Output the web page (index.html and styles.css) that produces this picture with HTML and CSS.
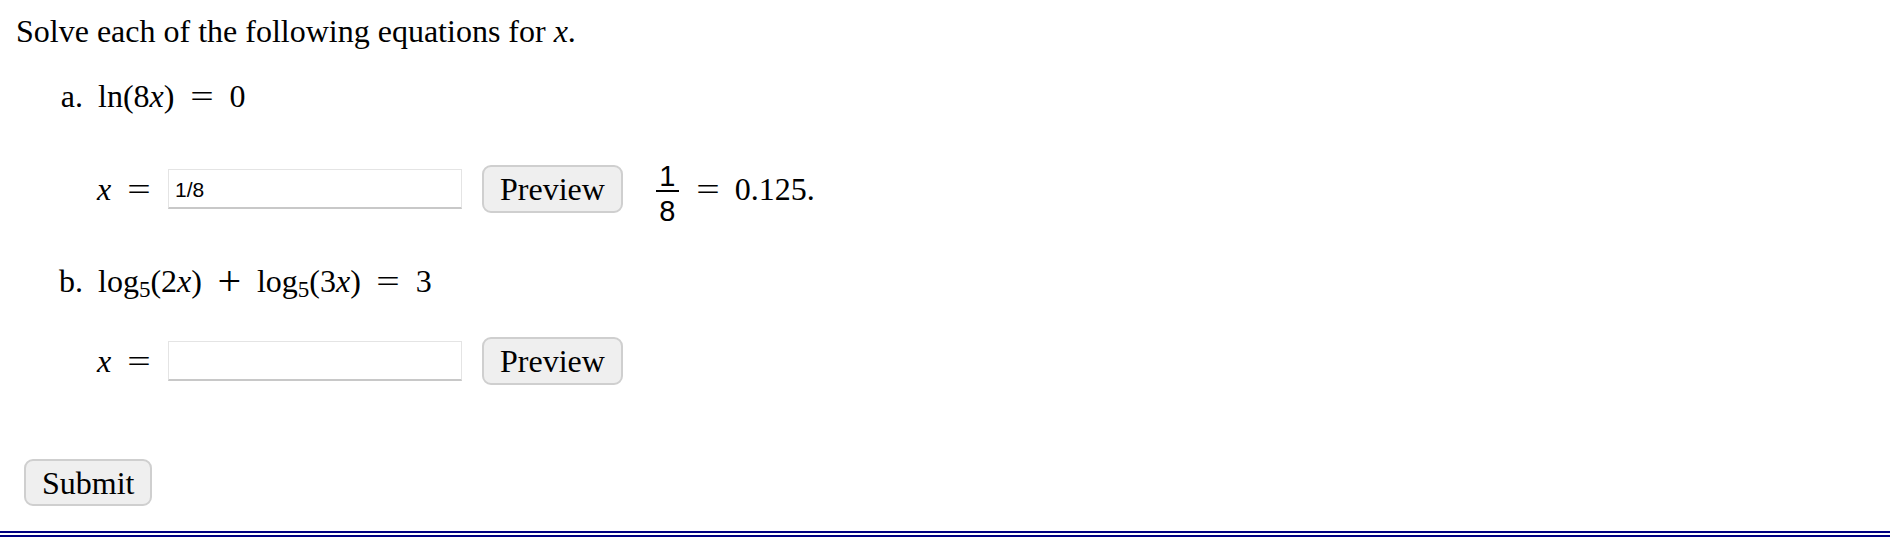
FILE: index.html
```html
<!DOCTYPE html>
<html lang="en">
<head>
<meta charset="utf-8">
<title>Solve equations</title>
<link rel="stylesheet" href="styles.css">
</head>
<body>
<div class="page">
  <p class="title">Solve each of the following equations for <i class="mv">x</i>.</p>

  <div class="eq eq-a"><span class="label">a.</span><span class="math">ln(8<i class="mv">x</i>)<span class="op"><span class="eqs">=</span></span>0</span></div>

  <div class="row row-a">
    <i class="mv var">x</i>
    <span class="rel"><span class="eqs">=</span></span>
    <input class="ans" type="text" value="1/8">
    <button class="btn btn-preview" type="button">Preview</button>
    <span class="frac"><span class="num">1</span><span class="bar"></span><span class="den">8</span></span>
    <span class="rel2"><span class="eqs">=</span></span>
    <span class="val">0.125.</span>
  </div>

  <div class="eq eq-b"><span class="label">b.</span><span class="math">log<span class="sub">5</span>(2<i class="mv">x</i>)<span class="op"><span class="plus">+</span></span>log<span class="sub">5</span>(3<i class="mv">x</i>)<span class="op"><span class="eqs">=</span></span>3</span></div>

  <div class="row row-b">
    <i class="mv var">x</i>
    <span class="rel"><span class="eqs">=</span></span>
    <input class="ans" type="text" value="">
    <button class="btn btn-preview" type="button">Preview</button>
  </div>

  <button class="btn btn-submit" type="button">Submit</button>
</div>
<div class="rule"></div>
</body>
</html>
```

FILE: styles.css
```css
html, body {
  margin: 0;
  padding: 0;
  background: #ffffff;
}

body {
  font-family: "Liberation Serif", "Times New Roman", serif;
  font-size: 32px;
  color: #000000;
}

.page {
  padding: 11px 16px 0 16px;
}

.title {
  margin: 0;
  line-height: 40px;
}

.mv {
  font-style: italic;
}

.eq {
  height: 40px;
  line-height: 40px;
  white-space: nowrap;
}

.eq-a {
  margin-top: 25px;
}

.eq-b {
  margin-top: 48px;
}

.label {
  display: inline-block;
  width: 67px;
  text-align: right;
}

.math {
  margin-left: 15px;
}

.op {
  display: inline-block;
  width: 55px;
  text-align: center;
}

.eqs {
  display: inline-block;
  transform: scaleX(1.3);
}

.plus {
  display: inline-block;
  font-size: 42px;
  line-height: 20px;
  vertical-align: -3px;
}

.sub {
  font-size: 23px;
  line-height: 0;
  vertical-align: -5px;
}

.row {
  display: flex;
  align-items: center;
  height: 48px;
  margin-left: 81px;
  line-height: 40px;
}

.row-a {
  margin-top: 49px;
}

.row-b {
  margin-top: 36px;
}

.var {
  width: 14px;
}

.rel {
  width: 57px;
  text-align: center;
}

.ans {
  box-sizing: border-box;
  width: 294px;
  height: 40px;
  margin: 0;
  padding: 2px 6px 0 6px;
  border: 1px solid #e4e4e4;
  border-bottom: 2px solid #c8c8c8;
  border-radius: 0;
  background: #ffffff;
  font-family: "Liberation Sans", Arial, sans-serif;
  font-size: 21px;
  color: #000000;
  outline: none;
}

.btn {
  box-sizing: border-box;
  height: 48px;
  margin: 0;
  padding: 0 16px;
  border: 2px solid #cfcfcf;
  border-radius: 9px;
  background: #efefef;
  font-family: "Liberation Serif", "Times New Roman", serif;
  font-size: 32px;
  line-height: 1;
  color: #000000;
}

.btn-preview {
  margin-left: 20px;
}

.frac {
  align-self: flex-start;
  margin-top: -1px;
  margin-left: 33px;
  display: flex;
  flex-direction: column;
  align-items: center;
  width: 23px;
  font-family: "Liberation Sans", Arial, sans-serif;
}

.num,
.den {
  display: block;
  font-size: 29px;
  line-height: 24px;
}

.num {
  margin-bottom: 2px;
}

.bar {
  display: block;
  width: 23px;
  height: 2px;
  background: #000000;
}

.den {
  margin-top: 7px;
}

.rel2 {
  width: 54px;
  margin-left: 2px;
  text-align: center;
}

.btn-submit {
  display: block;
  height: 47px;
  margin-top: 74px;
  margin-left: 8px;
}

.rule {
  margin-top: 25px;
  border-top: 6px double #000080;
}
```
